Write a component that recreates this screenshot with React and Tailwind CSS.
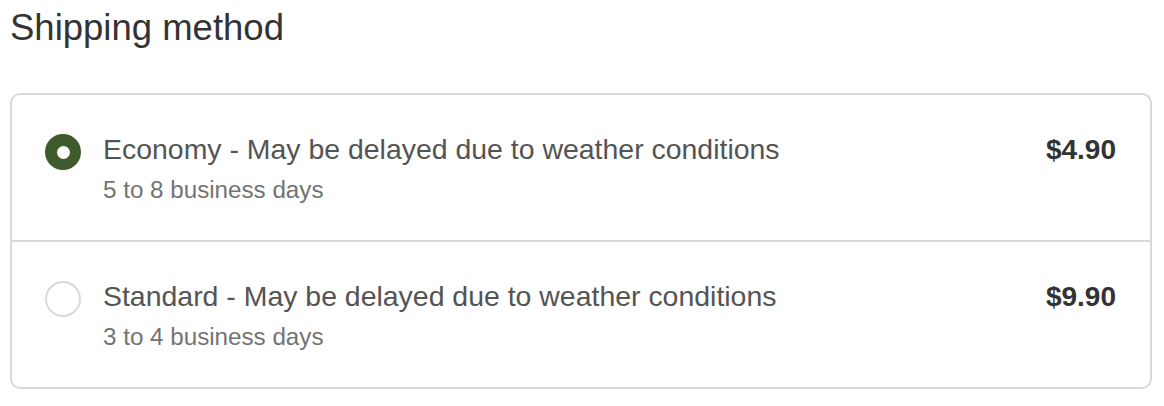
import React, { useState } from 'react';

const methods = [
  { id: 'economy', label: 'Economy - May be delayed due to weather conditions', eta: '5 to 8 business days', price: '$4.90' },
  { id: 'standard', label: 'Standard - May be delayed due to weather conditions', eta: '3 to 4 business days', price: '$9.90' },
];

function Radio({ checked }) {
  if (checked) {
    return (
      <span className="mt-[3px] flex h-[36px] w-[36px] shrink-0 items-center justify-center rounded-full bg-[#3f5a2c]">
        <span className="h-[13px] w-[13px] rounded-full bg-white" />
      </span>
    );
  }
  return <span className="mt-[3px] h-[36px] w-[36px] shrink-0 rounded-full border-2 border-[#d9d9d9] bg-white" />;
}

export default function App() {
  const [selected, setSelected] = useState('economy');

  return (
    <div className="min-h-screen bg-white pl-[10px] pr-[12px] pt-[6px] font-['Liberation_Sans',Arial,sans-serif]">
      <h2 className="text-[36.5px] leading-[44px] text-[#333333]">Shipping method</h2>

      <div className="mt-[43px] rounded-[10px] border-2 border-[#d9d9d9]">
        {methods.map((m, i) => (
          <label
            key={m.id}
            onClick={() => setSelected(m.id)}
            className={`flex cursor-pointer items-start gap-[22px] pl-[33px] pr-[34px] pt-[36px] pb-[34px] ${i > 0 ? 'border-t-2 border-[#d9d9d9]' : ''}`}
          >
            <Radio checked={selected === m.id} />
            <div className="flex-1">
              <div className="flex items-baseline justify-between">
                <span className="text-[28.45px] leading-[36px] text-[#545454]">{m.label}</span>
                <span className="text-[28px] font-bold leading-[36px] text-[#333333]">{m.price}</span>
              </div>
              <div className="mt-[6px] text-[24.2px] leading-[32px] text-[#737373]">{m.eta}</div>
            </div>
          </label>
        ))}
      </div>
    </div>
  );
}
